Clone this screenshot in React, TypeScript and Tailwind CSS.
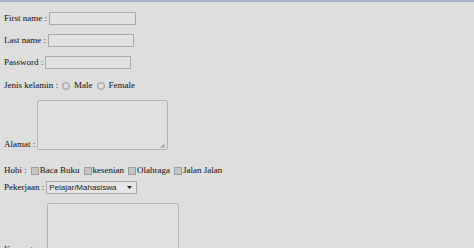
function TextBox({ width }: { width: string }) {
  return <div className={`${width} h-[13px] border border-[#a9a9a9] bg-[#e2e2e2]`} />;
}

function Radio({ label }: { label: string }) {
  return (
    <span className="flex items-center gap-[4px]">
      <span className="w-[8px] h-[8px] rounded-full border border-[#9a9a9a] bg-[#cfcfcf] flex items-center justify-center">
        <span className="w-[4px] h-[4px] rounded-full bg-[#e4e4e4]" />
      </span>
      <span>{label}</span>
    </span>
  );
}

function Check({ label }: { label: string }) {
  return (
    <span className="flex items-center gap-[1px]">
      <span className="w-[8px] h-[8px] border border-[#9c9c9c] bg-[#c4c4c4]" />
      <span>{label}</span>
    </span>
  );
}

export default function App() {
  return (
    <div
      className="w-[474px] h-[248px] overflow-hidden bg-[#dedede] border-t-2 border-[#aab3c9] text-[9px] leading-none text-[#0c0c0c]"
      style={{ fontFamily: '"Liberation Serif", "Times New Roman", serif' }}
    >
      <div className="flex flex-col pl-[4px] pt-[10px]">
        {/* nama */}
        <div className="flex items-center gap-[2px] h-[13px]">
          <span>First name :</span>
          <TextBox width="w-[87px]" />
        </div>
        <div className="flex items-center gap-[2px] h-[13px] mt-[9px]">
          <span>Last name :</span>
          <TextBox width="w-[86px]" />
        </div>
        <div className="flex items-center gap-[2px] h-[13px] mt-[9px]">
          <span>Password :</span>
          <TextBox width="w-[86px]" />
        </div>

        {/* jenis kelamin */}
        <div className="flex items-center gap-[4px] h-[13px] mt-[10px]">
          <span>Jenis kelamin :</span>
          <Radio label="Male" />
          <Radio label="Female" />
        </div>

        {/* alamat */}
        <div className="flex items-end gap-[2px] mt-[8px]">
          <span className="pb-[1px]">Alamat :</span>
          <div className="w-[131px] h-[50px] border border-[#b4b4b4] rounded-[2px] bg-[#e0e0e0] relative">
            <span className="absolute right-[2px] bottom-[1px] text-[6px] text-[#aaa]">◢</span>
          </div>
        </div>

        {/* hobi */}
        <div className="flex items-center gap-[4px] h-[13px] mt-[14px]">
          <span>Hobi :</span>
          <Check label="Baca Buku" />
          <Check label="kesenian" />
          <Check label="Olahraga" />
          <Check label="Jalan Jalan" />
        </div>

        {/* pekerjaan */}
        <div className="flex items-center gap-[2px] h-[13px] mt-[4px]">
          <span>Pekerjaan :</span>
          <div
            className="w-[91px] h-[13px] border border-[#a8a8a8] bg-[#e6e6e6] flex items-center justify-between pl-[2px] pr-[4px] text-[8px] text-[#222]"
            style={{ fontFamily: '"Liberation Sans", Arial, sans-serif' }}
          >
            <span>Pelajar/Mahasiswa</span>
            <svg width="5" height="3" viewBox="0 0 5 3">
              <polygon points="0,0 5,0 2.5,3" fill="#222" />
            </svg>
          </div>
        </div>

        {/* komentar */}
        <div className="flex items-end gap-[2px] mt-[9px]">
          <span className="pb-[1px]">Komentar :</span>
          <div className="w-[132px] h-[52px] border border-[#b4b4b4] rounded-[2px] bg-[#e0e0e0]" />
        </div>
      </div>
    </div>
  );
}
